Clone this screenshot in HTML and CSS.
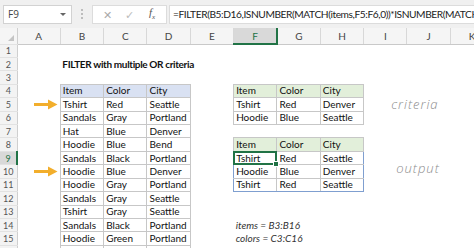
FILE: index.html
```html
<!DOCTYPE html>
<html lang="en">
<head>
  <meta charset="UTF-8">
  <title>FILTER with multiple OR criteria</title>
  <link rel="stylesheet" href="styles.css">
</head>
<body>
  <div class="fbar">
    <div class="namebox">F9<span class="caret"></span></div>
    <div class="grip"></div>
    <div class="btns">
      <span class="cancel">✕</span>
      <span class="enter">✓</span>
      <span class="fx"><i>f</i><sub>x</sub></span>
    </div>
    <div class="formula">=FILTER(B5:D16,ISNUMBER(MATCH(items,F5:F6,0))*ISNUMBER(MATCH(colors,G5:G6,0)))</div>
  </div>

  <table class="sheet">
    <colgroup>
      <col class="c-row">
      <col><col><col><col><col><col><col><col><col><col><col>
    </colgroup>
    <tr class="hdr">
      <th class="corner"><span class="tri"></span></th>
      <th>A</th><th>B</th><th>C</th><th>D</th><th>E</th><th class="cur">F</th><th>G</th><th>H</th><th>I</th><th>J</th><th>K</th>
    </tr>
    <tr><th>1</th><td></td><td></td><td></td><td></td><td></td><td></td><td></td><td></td><td></td><td></td><td></td></tr>
    <tr><th>2</th><td></td><td class="title">FILTER with multiple OR criteria</td><td></td><td></td><td></td><td></td><td></td><td></td><td></td><td></td><td></td></tr>
    <tr><th>3</th><td></td><td></td><td></td><td></td><td></td><td></td><td></td><td></td><td></td><td></td><td></td></tr>
    <tr><th>4</th><td></td>
      <td class="b hb">Item</td><td class="b hb">Color</td><td class="b hb">City</td><td></td>
      <td class="b hg">Item</td><td class="b hg">Color</td><td class="b hg">City</td><td></td><td></td><td></td></tr>
    <tr><th>5</th><td class="arrow"><svg width="24" height="11" viewBox="0 0 24 11"><path d="M0 4h14V0.5l9.5 5-9.5 5V7H0z" fill="#f2ae2c"/></svg></td>
      <td class="b">Tshirt</td><td class="b">Red</td><td class="b">Seattle</td><td></td>
      <td class="b">Tshirt</td><td class="b">Red</td><td class="b">Denver</td><td class="note"><span>criteria</span></td><td></td><td></td></tr>
    <tr><th>6</th><td></td>
      <td class="b">Sandals</td><td class="b">Gray</td><td class="b">Portland</td><td></td>
      <td class="b">Hoodie</td><td class="b">Blue</td><td class="b">Seattle</td><td></td><td></td><td></td></tr>
    <tr><th>7</th><td></td>
      <td class="b">Hat</td><td class="b">Blue</td><td class="b">Denver</td><td></td><td></td><td></td><td></td><td></td><td></td><td></td></tr>
    <tr><th>8</th><td></td>
      <td class="b">Hoodie</td><td class="b">Blue</td><td class="b">Bend</td><td></td>
      <td class="b hg">Item</td><td class="b hg">Color</td><td class="b hg">City</td><td></td><td></td><td></td></tr>
    <tr><th class="cur">9</th><td></td>
      <td class="b">Sandals</td><td class="b">Black</td><td class="b">Portland</td><td></td>
      <td class="b sp-l sel">Tshirt<span class="selbox"><span class="handle"></span></span></td><td class="b">Red</td><td class="b sp-r">Seattle</td><td></td><td></td><td></td></tr>
    <tr><th>10</th><td class="arrow"><svg width="24" height="11" viewBox="0 0 24 11"><path d="M0 4h14V0.5l9.5 5-9.5 5V7H0z" fill="#f2ae2c"/></svg></td>
      <td class="b">Hoodie</td><td class="b">Blue</td><td class="b">Denver</td><td></td>
      <td class="b sp-l">Hoodie</td><td class="b">Blue</td><td class="b sp-r">Denver</td><td class="note out"><span>output</span></td><td></td><td></td></tr>
    <tr><th>11</th><td></td>
      <td class="b">Hoodie</td><td class="b">Gray</td><td class="b">Portland</td><td></td>
      <td class="b sp-l sp-b">Tshirt</td><td class="b sp-b">Red</td><td class="b sp-r sp-b">Seattle</td><td></td><td></td><td></td></tr>
    <tr><th>12</th><td></td>
      <td class="b">Sandals</td><td class="b">Gray</td><td class="b">Seattle</td><td></td><td></td><td></td><td></td><td></td><td></td><td></td></tr>
    <tr><th>13</th><td></td>
      <td class="b">Tshirt</td><td class="b">Gray</td><td class="b">Seattle</td><td></td><td></td><td></td><td></td><td></td><td></td><td></td></tr>
    <tr><th>14</th><td></td>
      <td class="b">Sandals</td><td class="b">Black</td><td class="b">Portland</td><td></td>
      <td class="name">items = B3:B16</td><td></td><td></td><td></td><td></td><td></td></tr>
    <tr><th>15</th><td></td>
      <td class="b">Hoodie</td><td class="b">Green</td><td class="b">Portland</td><td></td>
      <td class="name">colors = C3:C16</td><td></td><td></td><td></td><td></td><td></td></tr>
    <tr><th>16</th><td></td>
      <td class="b">Tshirt</td><td class="b">Red</td><td class="b">Seattle</td><td></td><td></td><td></td><td></td><td></td><td></td><td></td></tr>
  </table>
</body>
</html>
```

FILE: styles.css
```css
body { margin: 0; background: #fff; font-family: Lato, "Liberation Sans", sans-serif; overflow: hidden; width: 474px; height: 248px; }

/* formula bar */
.fbar { display: flex; align-items: center; height: 28px; background: #f0f0f0; padding-left: 3px; font-family: "Open Sans", "Liberation Sans", sans-serif; }
.namebox { box-sizing: border-box; width: 69px; height: 19px; background: #fff; border: 1px solid #d2d2d2; display: flex; align-items: center; justify-content: space-between; padding: 0 5px 0 4px; font-size: 10px; color: #444; }
.caret { width: 0; height: 0; border-left: 3px solid transparent; border-right: 3px solid transparent; border-top: 3px solid #666; }
.grip { width: 0; height: 10px; border-left: 2px dotted #bdbdbd; margin: 0 9px 0 9px; }
.btns { box-sizing: border-box; width: 75px; height: 19px; background: #fff; border: 1px solid #dcdcdc; display: flex; align-items: center; padding-left: 10px; gap: 13px; color: #aaa; font-size: 11px; }
.btns .enter { color: #bcbcbc; }
.btns .fx { font-family: "Liberation Serif", serif; color: #555; font-size: 11px; margin-left: 2px; }
.btns .fx sub { font-size: 7px; font-style: italic; }
.formula { box-sizing: border-box; flex: 1; height: 19px; margin-left: 2px; background: #fff; border: 1px solid #dcdcdc; border-right: none; padding: 2px 0 0 3px; white-space: nowrap; overflow: hidden; font-family: Lato, "Liberation Sans", sans-serif; font-size: 10.2px; letter-spacing: -0.42px; color: #222; }

/* grid */
.sheet { border-collapse: collapse; table-layout: fixed; width: 494px; font-size: 10px; color: #111; }
.sheet col { width: 43.33px; }
.sheet col.c-row { width: 17px; }
.sheet tr { height: 13.43px; }
.sheet tr.hdr { height: 16px; }
.sheet td { padding: 0 2px; line-height: 11px; white-space: nowrap; overflow: visible; vertical-align: middle; }
.sheet th { font-weight: normal; color: #555; background: #f3f3f3; font-size: 9px; padding: 0; }
.sheet tr > th:first-child { border-right: 1px solid #cfcfcf; border-bottom: 1px solid #e2e2e2; text-align: center; }
.hdr th { border-right: 1px solid #d8d8d8; border-bottom: 1px solid #c9c9c9; color: #444; font-size: 10px; background: #f5f5f5; }
.hdr th.cur { background: #d9d9d9; border-bottom: 2px solid #217346; color: #217346; }
.sheet tr > th.cur { background: #d9d9d9; border-right: 2px solid #217346; color: #217346; }
.corner { position: relative; }
.tri { position: absolute; right: 3px; bottom: 3px; width: 0; height: 0; border-left: 6px solid transparent; border-bottom: 6px solid #c4c4c4; }

.title { font-weight: bold; letter-spacing: -0.35px; }
.b { border: 1px solid #c7c7c7; }
.hb { background: #d9e1f2; }
.hg { background: #e2efda; }
.sp-l { border-left-color: #7f9fd0; }
.sp-r { border-right-color: #7f9fd0; }
.sp-b { border-bottom-color: #7f9fd0; }
.sel { position: relative; }
.selbox { position: absolute; left: -1px; top: -1px; right: -1px; bottom: -1px; border: 2px solid #217346; }
.handle { position: absolute; right: -4px; bottom: -4px; width: 4px; height: 4px; background: #217346; border: 1px solid #fff; }

.arrow { text-align: right; padding-right: 6px; }
.arrow svg { display: block; margin-left: auto; }

.note span { display: block; padding-left: 25px; font-family: "Open Sans", "DejaVu Sans", sans-serif; font-style: italic; font-weight: 300; font-size: 13px; letter-spacing: 1px; color: #8c8c8c; line-height: 11px; }
.note.out span { padding-left: 30px; margin-top: -7px; }
.name { font-style: italic; color: #333; padding-left: 2px; }
```
